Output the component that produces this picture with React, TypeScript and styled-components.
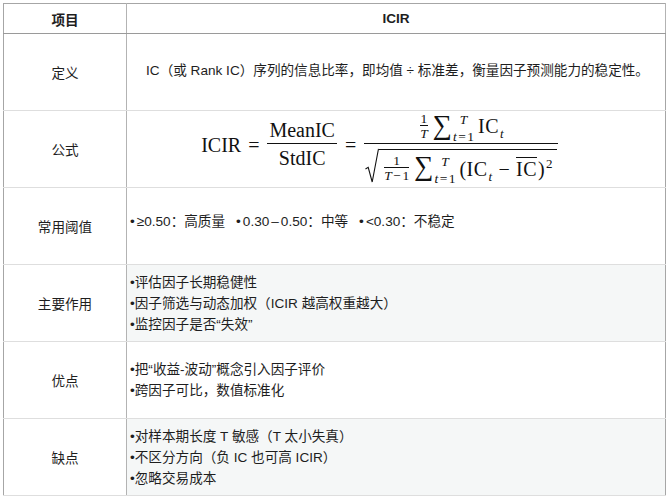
import React from "react";
import styled, { createGlobalStyle } from "styled-components";

const Global = createGlobalStyle`
  html, body { margin: 0; padding: 0; background: #ffffff; }
  body { font-family: "Liberation Sans", "Noto Sans CJK SC", sans-serif; }
`;

const Page = styled.div`
  padding: 3px 0 0 3px;
`;

const Table = styled.table`
  width: 663px;
  border-collapse: collapse;
  border: 1px solid #a6a6a6;
  font-family: "Liberation Sans", "Noto Sans CJK SC", sans-serif;
  font-size: 13.6px;
  color: #1e1e1e;
  table-layout: fixed;
`;

const HeadCell = styled.th<{ $w?: number }>`
  height: 29px;
  padding: 0;
  font-weight: 700;
  text-align: center;
  border-bottom: 1px solid #9a9a9a;
  border-right: 1px solid #b3b3b3;
  width: ${(p) => (p.$w ? `${p.$w}px` : "auto")};
`;

const Row = styled.tr`
  height: 77px;
`;

const Label = styled.td`
  padding: 0;
  text-align: center;
  border-right: 1px solid #b3b3b3;
  border-bottom: 1px solid #dedede;
  background: #ffffff;
`;

const Cell = styled.td<{ $striped?: boolean; $center?: boolean; $padBottom?: number }>`
  padding: 0 0 ${(p) => p.$padBottom ?? 0}px 3px;
  text-align: ${(p) => (p.$center ? "center" : "left")};
  border-bottom: 1px solid #dedede;
  background: ${(p) => (p.$striped ? "#f5f7f7" : "#ffffff")};
  line-height: 21px;
`;

const List = styled.ul`
  list-style: none;
  margin: 0;
  padding: 0;
`;

const Item = styled.li`
  line-height: 21px;
`;

const Inline = styled.span`
  margin-right: 11px;
`;

const Dot = styled.span`
  margin-right: 2px;
`;

const Dash = styled.span`
  margin: 0 2px;
`;

/* ---------- Formula ---------- */

const FormulaWrap = styled.div`
  display: flex;
  justify-content: center;
  padding: 0 35px 3px 0;
`;

const MathBox = styled.div`
  display: grid;
  grid-template-columns: repeat(4, auto);
  grid-template-rows: auto 1px auto;
  font-family: "Liberation Serif", "DejaVu Serif", serif;
  font-size: 20px;
  line-height: 1;
  color: #111;
`;

const Axis = styled.div<{ $col: number }>`
  grid-column: ${(p) => p.$col};
  grid-row: 2;
  align-self: center;
  white-space: nowrap;
  padding-top: 3px;
`;

const Num = styled.div<{ $col: number }>`
  grid-column: ${(p) => p.$col};
  grid-row: 1;
  align-self: end;
  justify-self: center;
  display: flex;
  align-items: center;
  white-space: nowrap;
  padding: 0 3px 3px;
`;

const Den = styled.div<{ $col: number }>`
  grid-column: ${(p) => p.$col};
  grid-row: 3;
  align-self: start;
  justify-self: center;
  display: flex;
  white-space: nowrap;
  padding: 4px 2px 0;
`;

const Bar = styled.div<{ $col: number }>`
  grid-column: ${(p) => p.$col};
  grid-row: 2;
  border-top: 1px solid #111;
  margin: 0 1px;
`;

const Rel = styled.span`
  margin: 0 7px;
`;

const It = styled.i`
  font-style: italic;
`;

const SmallFrac = styled.span`
  display: inline-flex;
  flex-direction: column;
  align-items: center;
  font-size: 13.5px;
  line-height: 11px;
  margin: 0 4px 0 2px;
`;

const SmallBar = styled.span`
  align-self: stretch;
  border-top: 1px solid #111;
  margin: 1px 0 2px;
`;

const Op = styled.span`
  margin: 0 1.5px;
`;

const Minus = styled.span`
  margin: 0 6px;
`;

const Sum = styled.span`
  font-size: 27px;
  line-height: 0.9;
  margin-left: 1px;
  position: relative;
  top: -1px;
`;

const Limits = styled.span`
  display: inline-flex;
  flex-direction: column;
  justify-content: space-between;
  height: 28px;
  font-size: 13.5px;
  line-height: 11px;
  margin: 0 4px 0 1px;
  position: relative;
  top: 2px;
`;

const Sub = styled.span`
  font-size: 13px;
  position: relative;
  top: 5px;
  margin-left: 1px;
`;

const Sup = styled.span`
  font-size: 13px;
  position: relative;
  top: -8px;
  margin-left: 1px;
`;

const Word = styled.span`
  display: inline-flex;
  align-items: baseline;
  letter-spacing: 0.4px;
`;

const RadSign = styled.svg`
  width: 14px;
  height: 35px;
  flex: none;
`;

const Radicand = styled.span`
  display: flex;
  align-items: center;
  border-top: 1px solid #111;
  padding: 2px 4px 0 3px;
  margin-top: 1px;
`;

const Over = styled.span`
  border-top: 1px solid #111;
  padding-top: 1px;
  line-height: 1;
  margin-right: 1px;
`;

const Formula: React.FC = () => (
  <FormulaWrap>
    <MathBox>
      <Axis $col={1}>
        ICIR<Rel>=</Rel>
      </Axis>
      <Num $col={2}>MeanIC</Num>
      <Bar $col={2} />
      <Den $col={2}>StdIC</Den>
      <Axis $col={3}>
        <Rel>=</Rel>
      </Axis>
      <Num $col={4}>
        <SmallFrac>
          <span>1</span>
          <SmallBar />
          <It>T</It>
        </SmallFrac>
        <Sum>∑</Sum>
        <Limits>
          <It>T</It>
          <span>
            <It>t</It>
            <Op>=</Op>1
          </span>
        </Limits>
        <Word>
          IC<Sub><It>t</It></Sub>
        </Word>
      </Num>
      <Bar $col={4} />
      <Den $col={4}>
        <RadSign viewBox="0 0 14 35" preserveAspectRatio="none">
          <path d="M0.5 21 L3.2 19.3 L7.2 34 L13.5 0.8" fill="none" stroke="#111" strokeWidth="1.1" />
        </RadSign>
        <Radicand>
          <SmallFrac>
            <span>1</span>
            <SmallBar />
            <span>
              <It>T</It>
              <Op>−</Op>1
            </span>
          </SmallFrac>
          <Sum>∑</Sum>
          <Limits>
            <It>T</It>
            <span>
              <It>t</It>
              <Op>=</Op>1
            </span>
          </Limits>
          <Word>
            (IC<Sub><It>t</It></Sub>
            <Minus>−</Minus>
            <Over>IC</Over>)<Sup>2</Sup>
          </Word>
        </Radicand>
      </Den>
    </MathBox>
  </FormulaWrap>
);

const rows = [
  { label: "主要作用", items: ["•评估因子长期稳健性", "•因子筛选与动态加权（ICIR 越高权重越大）", "•监控因子是否“失效”"], striped: true },
  { label: "优点", items: ["•把“收益-波动”概念引入因子评价", "•跨因子可比，数值标准化"], striped: false },
  { label: "缺点", items: ["•对样本期长度 T 敏感（T 太小失真）", "•不区分方向（负 IC 也可高 ICIR）", "•忽略交易成本"], striped: true },
];

export default function App() {
  return (
    <Page>
      <Global />
      <Table>
        <thead>
          <tr>
            <HeadCell $w={122}>项目</HeadCell>
            <HeadCell>ICIR</HeadCell>
          </tr>
        </thead>
        <tbody>
          <Row>
            <Label>定义</Label>
            <Cell $center $padBottom={4}>IC（或 Rank IC）序列的信息比率，即均值 ÷ 标准差，衡量因子预测能力的稳定性。</Cell>
          </Row>
          <Row>
            <Label>公式</Label>
            <Cell $center>
              <Formula />
            </Cell>
          </Row>
          <Row>
            <Label>常用阈值</Label>
            <Cell $padBottom={9}>
              <Inline>
                <Dot>•</Dot>≥0.50：高质量
              </Inline>
              <Inline>
                <Dot>•</Dot>0.30<Dash>–</Dash>0.50：中等
              </Inline>
              <Inline>
                <Dot>•</Dot>&lt;0.30：不稳定
              </Inline>
            </Cell>
          </Row>
          {rows.map((r) => (
            <Row key={r.label}>
              <Label>{r.label}</Label>
              <Cell $striped={r.striped}>
                <List>
                  {r.items.map((t) => (
                    <Item key={t}>{t}</Item>
                  ))}
                </List>
              </Cell>
            </Row>
          ))}
        </tbody>
      </Table>
    </Page>
  );
}
